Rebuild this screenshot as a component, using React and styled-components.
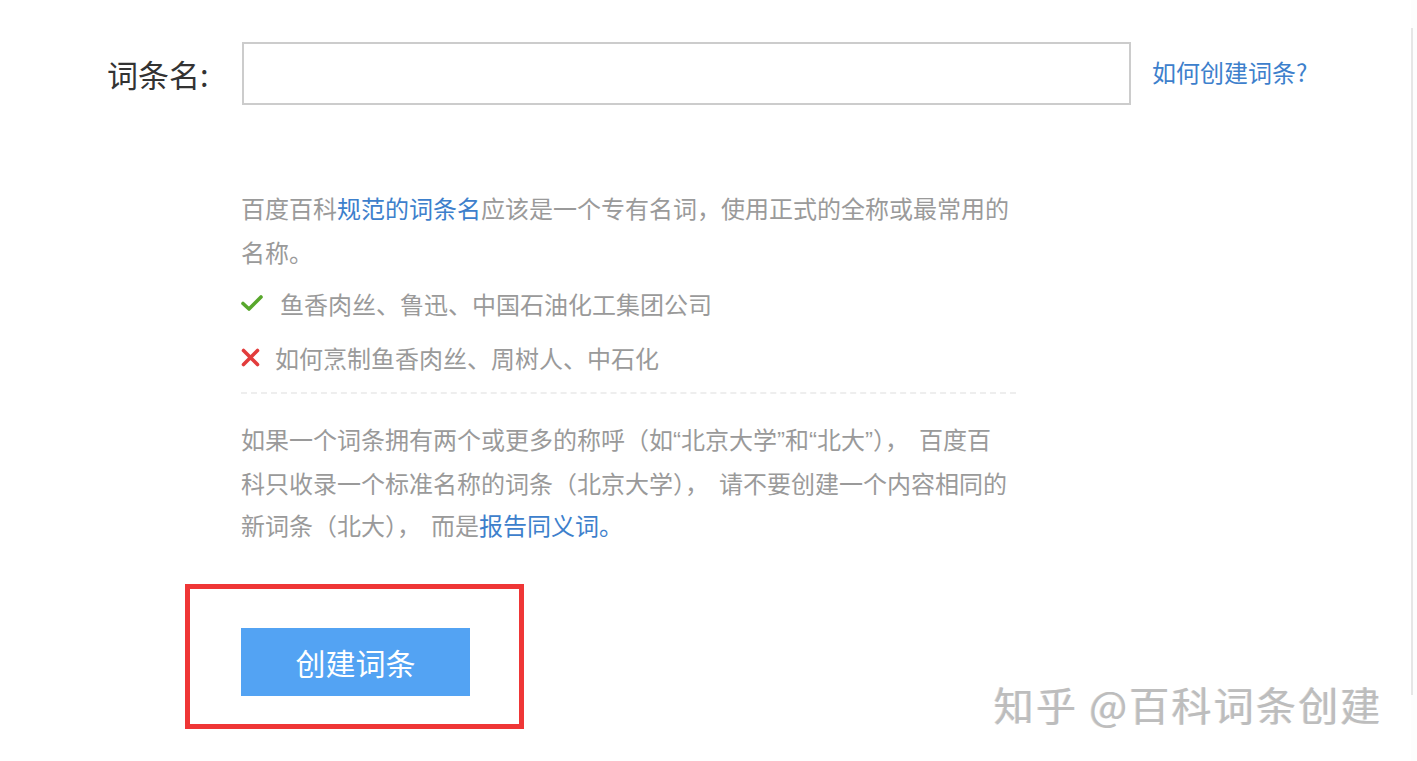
import React from 'react';
import styled, { createGlobalStyle } from 'styled-components';

const GlobalStyle = createGlobalStyle`
  html, body {
    margin: 0;
    padding: 0;
    background: #fff;
  }
  body {
    font-family: "Microsoft YaHei", "Noto Sans CJK SC", "Noto Sans", sans-serif;
  }
`;

const Page = styled.div`
  position: relative;
  width: 1417px;
  height: 761px;
  overflow: hidden;
  box-sizing: border-box;
  padding: 42px 0 0 107px;
`;

const NameRow = styled.div`
  display: flex;
  align-items: center;
`;

const Label = styled.label`
  width: 135px;
  font-size: 31px;
  color: #333;
  line-height: 63px;
`;

const NameInput = styled.input`
  width: 889px;
  height: 63px;
  box-sizing: border-box;
  border: 2px solid #cccccc;
  outline: none;
  padding: 0 12px;
  font-size: 24px;
`;

const HelpLink = styled.a`
  margin-left: 21px;
  margin-top: -4px;
  font-size: 24px;
  color: #3d80cc;
  text-decoration: none;
`;

const Content = styled.div`
  margin-left: 134px;
  margin-top: 81px;
  width: 775px;
  font-size: 24px;
  color: #9a9a9a;
`;

const Paragraph = styled.p`
  margin: 0;
  line-height: ${({ $lh }) => $lh || 44}px;
  white-space: ${({ $nowrap }) => ($nowrap ? 'nowrap' : 'normal')};
`;

const Blue = styled.a`
  color: #3d80cc;
  text-decoration: none;
`;

const Quote = styled.span`
  font-family: "Liberation Sans", Arial, sans-serif;
`;

const Comma = styled.span`
  margin-right: 10px;
`;

const Example = styled.div`
  display: flex;
  align-items: center;
  height: 54px;
  gap: ${({ $gap }) => $gap}px;
  &:first-of-type {
    margin-top: 2px;
  }
`;

const Divider = styled.div`
  margin-top: 8px;
  border-top: 2px dashed #eeeeee;
  margin-bottom: 24px;
`;

const Highlight = styled.div`
  margin-left: -56px;
  margin-top: 38px;
  width: 339px;
  height: 145px;
  box-sizing: border-box;
  border: 5px solid #ef3636;
  padding: 39px 0 0 51px;
`;

const CreateButton = styled.button`
  width: 229px;
  height: 68px;
  border: none;
  background: #53a3f3;
  color: #fff;
  font-family: inherit;
  font-size: 30px;
  cursor: pointer;
`;

const Watermark = styled.div`
  position: absolute;
  left: 994px;
  top: 675px;
  font-size: 40px;
  color: #bdbdbd;
  letter-spacing: 2.2px;
  text-shadow: 1px 1px 0 #fff, -1px 0 0 #d6d6d6;
  white-space: nowrap;
`;

const ScrollTrack = styled.div`
  position: absolute;
  right: 0;
  top: 0;
  width: 6px;
  height: 100%;
  background: #fdfdfd;
  &::after {
    content: '';
    position: absolute;
    left: 0;
    top: 28px;
    width: 2px;
    height: 667px;
    background: #e6e6e6;
  }
`;

const Check = () => (
  <svg width="22" height="18" viewBox="0 0 22 18">
    <path d="M2 9.5 L8 15 L20 3" fill="none" stroke="#58a72c" strokeWidth="3.6" strokeLinecap="round" strokeLinejoin="round" />
  </svg>
);

const Cross = () => (
  <svg width="19" height="19" viewBox="0 0 19 19">
    <path d="M2.5 2.5 L16.5 16.5 M16.5 2.5 L2.5 16.5" fill="none" stroke="#e23c3c" strokeWidth="3.6" strokeLinecap="round" />
  </svg>
);

const App = () => {
  return (
    <Page>
      <GlobalStyle />
      <NameRow>
        <Label>词条名:</Label>
        <NameInput type="text" />
        <HelpLink href="#">如何创建词条?</HelpLink>
      </NameRow>
      <Content>
        <Paragraph>
          百度百科<Blue href="#">规范的词条名</Blue>应该是一个专有名词，使用正式的全称或最常用的名称。
        </Paragraph>
        <Example $gap={17}>
          <Check />
          <span>鱼香肉丝、鲁迅、中国石油化工集团公司</span>
        </Example>
        <Example $gap={15}>
          <Cross />
          <span>如何烹制鱼香肉丝、周树人、中石化</span>
        </Example>
        <Divider />
        <Paragraph $lh={42} $nowrap>
          如果一个词条拥有两个或更多的称呼（如<Quote>“</Quote>北京大学<Quote>”</Quote>和<Quote>“</Quote>北大<Quote>”</Quote>）<Comma>，</Comma>百度百
          <br />
          科只收录一个标准名称的词条（北京大学）<Comma>，</Comma>请不要创建一个内容相同的
          <br />
          新词条（北大）<Comma>，</Comma>而是<Blue href="#">报告同义词。</Blue>
        </Paragraph>
        <Highlight>
          <CreateButton>创建词条</CreateButton>
        </Highlight>
      </Content>
      <Watermark>知乎 @百科词条创建</Watermark>
      <ScrollTrack />
    </Page>
  );
};

export default App;
